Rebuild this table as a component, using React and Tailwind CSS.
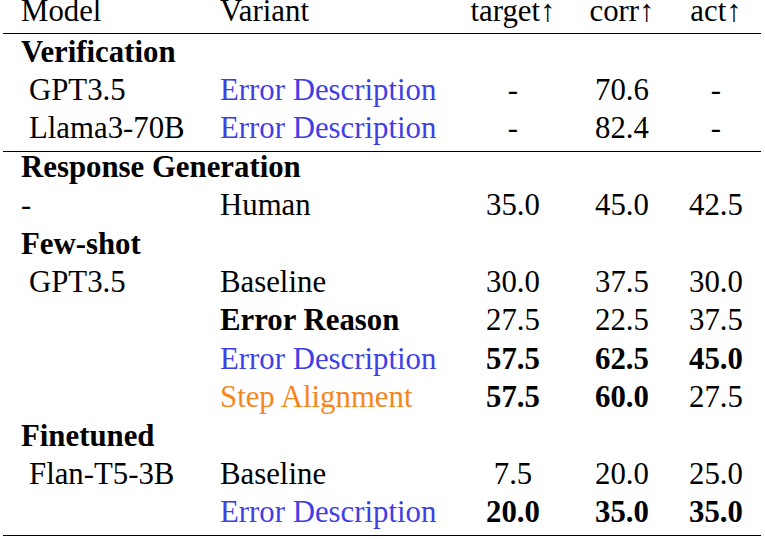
import React from "react";

const BLUE = "text-[#3f3fe6]";
const ORANGE = "text-[#f5861c]";

function Row({ model, variant, vals = ["", "", ""], modelCls = "", variantCls = "", valCls = ["", "", ""], indent = false, rowCls = "h-[38.4px] leading-[38.4px]" }) {
  return (
    <div className={`grid grid-cols-[199px_240px_106px_112px_76px] ${rowCls} whitespace-nowrap`}>
      <div className={`${modelCls} ${indent ? "pl-[8px]" : ""}`}>{model}</div>
      <div className={variantCls}>{variant}</div>
      {vals.map((v, i) => (
        <div key={i} className={`text-center ${valCls[i] || ""}`}>{v}</div>
      ))}
    </div>
  );
}

function Section({ title }) {
  return (
    <div className="h-[38.4px] leading-[38.4px] font-bold whitespace-nowrap">{title}</div>
  );
}

export default function App() {
  return (
    <div
      className="w-[765px] h-[539px] overflow-hidden bg-white text-black text-[30.8px]"
      style={{ fontFamily: '"Liberation Serif", "Times New Roman", serif' }}
    >
      <div className="pl-[21px] h-[30.8px]">
        <Row model="Model" variant="Variant" vals={["target↑", "corr↑", "act↑"]} rowCls="h-[23.2px] leading-[23.2px]" />
      </div>
      <div className="mx-[3px] w-[758px] h-px bg-black mt-[2px] mb-[-1.2px]" />
      <div className="pl-[21px]">
        <Section title="Verification" />
        <Row indent model="GPT3.5" variant="Error Description" variantCls={BLUE} vals={["-", "70.6", "-"]} />
        <Row indent model="Llama3-70B" variant="Error Description" variantCls={BLUE} vals={["-", "82.4", "-"]} />
      </div>
      <div className="mx-[3px] w-[758px] h-px bg-black mt-[3px] mb-[-4px]" />
      <div className="pl-[21px]">
        <Section title="Response Generation" />
        <Row model="-" variant="Human" vals={["35.0", "45.0", "42.5"]} />
        <Section title="Few-shot" />
        <Row indent model="GPT3.5" variant="Baseline" vals={["30.0", "37.5", "30.0"]} />
        <Row model="" variant="Error Reason" variantCls="font-bold" vals={["27.5", "22.5", "37.5"]} />
        <Row model="" variant="Error Description" variantCls={BLUE} vals={["57.5", "62.5", "45.0"]} valCls={["font-bold", "font-bold", "font-bold"]} />
        <Row model="" variant="Step Alignment" variantCls={ORANGE} vals={["57.5", "60.0", "27.5"]} valCls={["font-bold", "font-bold", ""]} />
        <Section title="Finetuned" />
        <Row indent model="Flan-T5-3B" variant="Baseline" vals={["7.5", "20.0", "25.0"]} />
        <Row model="" variant="Error Description" variantCls={BLUE} vals={["20.0", "35.0", "35.0"]} valCls={["font-bold", "font-bold", "font-bold"]} />
      </div>
      <div className="mx-[3px] w-[758px] h-px bg-black mt-[3.7px]" />
    </div>
  );
}
